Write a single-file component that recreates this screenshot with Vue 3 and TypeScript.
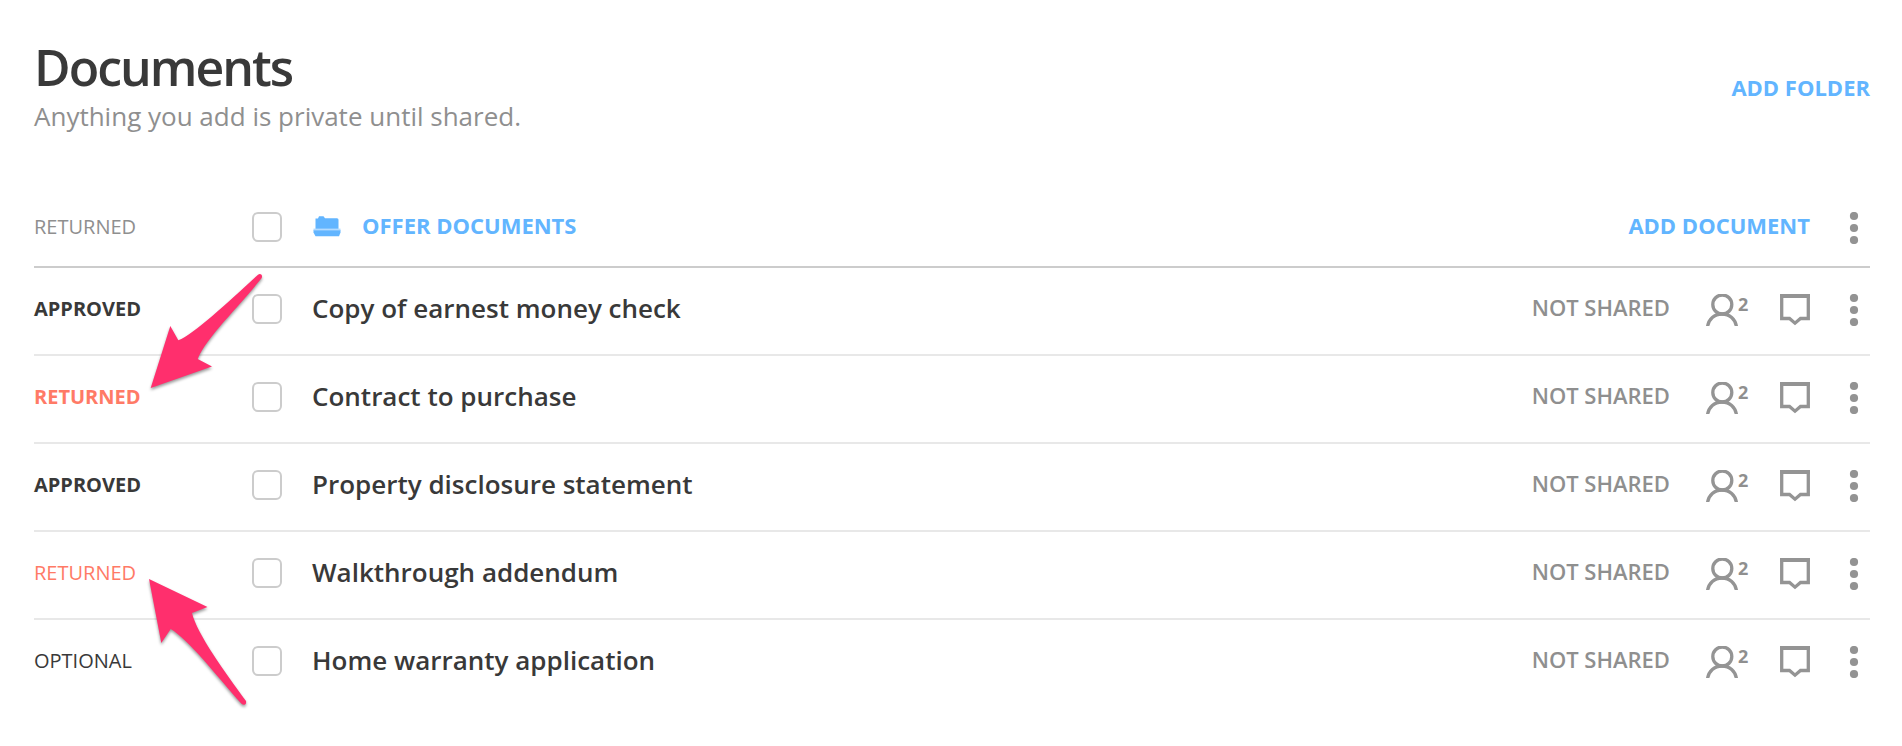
<script setup lang="ts">
interface DocumentRow {
  status: string
  tone: 'dark' | 'alert'
  bold: boolean
  name: string
}

const rows: DocumentRow[] = [
  { status: 'APPROVED', tone: 'dark', bold: true, name: 'Copy of earnest money check' },
  { status: 'RETURNED', tone: 'alert', bold: true, name: 'Contract to purchase' },
  { status: 'APPROVED', tone: 'dark', bold: true, name: 'Property disclosure statement' },
  { status: 'RETURNED', tone: 'alert', bold: false, name: 'Walkthrough addendum' },
  { status: 'OPTIONAL', tone: 'dark', bold: false, name: 'Home warranty application' },
]
</script>

<template>
  <main class="page">
    <header class="top">
      <div>
        <h1>Documents</h1>
        <p class="subtitle">Anything you add is private until shared.</p>
      </div>
      <a class="action add-folder">ADD FOLDER</a>
    </header>

    <section>
      <div class="row folder">
        <span class="status muted">RETURNED</span>
        <span class="checkbox"></span>
        <svg class="folder-icon" width="28" height="21" viewBox="0 0 28 21">
          <path d="M2.500 13V2.500H5L6 .3h4.500L12 2.300H24q1.500 0 1.500 1.500V13z" fill="#62b5ff" />
          <path d="M.5 14h27v2.500l-1.500 3.800H2.500l-2-3.800z" fill="#62b5ff" />
          <path d="M.5 13.500h27" stroke="#b4dbff" stroke-width="1.800" />
        </svg>
        <a class="action folder-name">OFFER DOCUMENTS</a>
        <a class="action add-document">ADD DOCUMENT</a>
        <svg class="dots" width="10" height="32" viewBox="0 0 10 32">
          <circle cx="5" cy="4" r="4.100" /><circle cx="5" cy="16" r="4.100" /><circle cx="5" cy="28" r="4.100" />
        </svg>
      </div>

      <div v-for="row in rows" :key="row.name" class="row">
        <span class="status" :class="[row.tone, { bold: row.bold }]">{{ row.status }}</span>
        <span class="checkbox"></span>
        <span class="name">{{ row.name }}</span>
        <span class="sharing">NOT SHARED</span>
        <span class="people">
          <svg width="32" height="32" viewBox="0 0 32 32">
            <circle cx="16.300" cy="10.500" r="9.500" />
            <path d="M1.500 33C2.500 25 8.500 20 16 20S29.500 25 30.500 33" />
          </svg>
          <span class="count">2</span>
        </span>
        <svg class="comment" width="30" height="32" viewBox="0 0 30 32">
          <path d="M1.700 2H28.300V24.500H20.500L15 29.200 9.500 24.500H1.700z" />
          <path class="cap" d="M0 2H30" />
        </svg>
        <svg class="dots" width="10" height="32" viewBox="0 0 10 32">
          <circle cx="5" cy="4" r="4.100" /><circle cx="5" cy="16" r="4.100" /><circle cx="5" cy="28" r="4.100" />
        </svg>
      </div>
    </section>

    <svg class="annotations" width="1902" height="746" viewBox="0 0 1902 746">
      <path d="M150.700 388L170.300 326L178.300 340.300C194 334 226 304 258 274.700Q260 273.300 261.500 274.800Q262.500 276.500 261.500 278.300C238 308 206 338 197.700 359L212 366.500z" />
      <path d="M149 579L207.500 607L192 613C197 634 225 672 246 701Q246.500 703.500 245 704.600Q243.500 705.300 241.500 703.800C215 674 189 640 170.700 629L161.300 643z" />
    </svg>
  </main>
</template>

<style>
body {
  margin: 0;
  background: #fff;
}
</style>

<style scoped>
.page {
  position: relative;
  box-sizing: border-box;
  width: 1902px;
  height: 746px;
  padding: 31px 32px 0 34px;
  overflow: hidden;
  background: #fff;
  color: #393939;
  font-family: 'Open Sans', 'Noto Sans', sans-serif;
}
.top {
  display: flex;
  justify-content: space-between;
  height: 155px;
}
h1 {
  margin: 0;
  font-size: 50px;
  font-weight: 600;
  line-height: 72px;
  letter-spacing: -2px;
}
.subtitle {
  margin: 0;
  color: #8f8f8f;
  font-size: 26px;
  line-height: 26px;
}
.action {
  color: #62b5ff;
  font-size: 22px;
  font-weight: 700;
  line-height: 30px;
  white-space: nowrap;
}
.add-folder {
  margin-top: 41px;
}
.row {
  display: flex;
  align-items: center;
  box-sizing: border-box;
  height: 88px;
  padding-bottom: 4px;
  border-bottom: 2px solid #e8e8e8;
}
.row:last-child {
  border-bottom-color: transparent;
}
.folder {
  height: 82px;
  padding-top: 2px;
  padding-bottom: 0;
  border-bottom-color: #ccc;
}
.status {
  width: 218px;
  flex: none;
  font-size: 20px;
  line-height: 28px;
}
.bold {
  font-weight: 700;
}
.muted {
  color: #8f8f8f;
}
.alert {
  color: #ff7a66;
}
.checkbox {
  box-sizing: border-box;
  flex: none;
  width: 30px;
  height: 30px;
  margin-right: 30px;
  border: 2px solid #ccc;
  border-radius: 6px;
  background: #fff;
}
.name {
  flex: 1;
  margin-bottom: 2px;
  font-size: 26px;
  font-weight: 600;
  line-height: 36px;
}
.folder-icon {
  margin-left: 1px;
  margin-right: 21px;
  margin-bottom: 2px;
}
.folder-name {
  flex: 1;
  margin-bottom: 4px;
}
.add-document {
  margin-right: 39px;
  margin-bottom: 4px;
}
.sharing {
  margin-right: 36px;
  margin-bottom: 4px;
  color: #8f8f8f;
  font-size: 22px;
  font-weight: 600;
  line-height: 30px;
}
.people {
  display: flex;
  width: 74px;
  margin-top: 2px;
}
.people svg,
.comment {
  flex: none;
  fill: none;
  stroke: #949494;
  stroke-width: 3.3;
}
.count {
  color: #8f8f8f;
  font-size: 18px;
  font-weight: 700;
  line-height: 20px;
}
.comment {
  margin-top: 2px;
  margin-right: 39px;
}
.comment .cap {
  stroke-width: 4;
}
.dots {
  flex: none;
  margin-top: 2px;
  margin-right: 11px;
  fill: #939393;
}
.annotations {
  position: absolute;
  top: 0;
  left: 0;
  fill: #ff2f6d;
  filter: drop-shadow(0 2px 1.5px rgba(0, 0, 0, 0.4));
  pointer-events: none;
}
</style>
